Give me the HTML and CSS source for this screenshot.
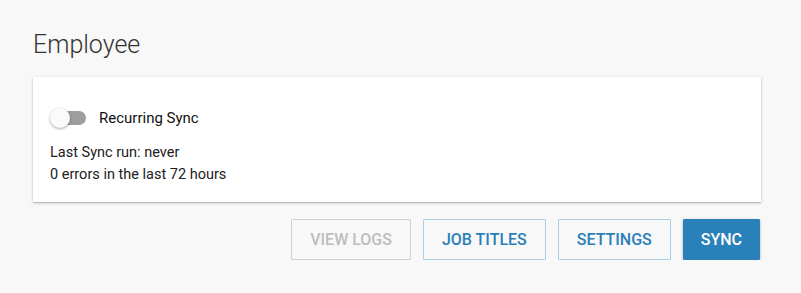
FILE: index.html
```html
<!DOCTYPE html>
<html>
<head>
<meta charset="utf-8">
<link rel="stylesheet" href="styles.css">
</head>
<body>
<div class="page">
  <h1 class="title">Employee</h1>
  <div class="card">
    <div class="toggle-row">
      <span class="switch"><span class="track"></span><span class="knob"></span></span>
      <span class="toggle-label">Recurring Sync</span>
    </div>
    <div class="info">
      <div>Last Sync run: never</div>
      <div>0 errors in the last 72 hours</div>
    </div>
  </div>
  <div class="actions">
    <button class="btn btn-disabled">VIEW LOGS</button>
    <button class="btn btn-outline">JOB TITLES</button>
    <button class="btn btn-outline">SETTINGS</button>
    <button class="btn btn-primary">SYNC</button>
  </div>
</div>
</body>
</html>
```
FILE: styles.css
```css
html, body {
  margin: 0;
  padding: 0;
  background: #f8f8f8;
  font-family: Roboto, "Liberation Sans", sans-serif;
  color: #212121;
}
.page {
  width: 728px;
  padding: 28px 0 0 33px;
}
.title {
  margin: 0;
  font-weight: 300;
  font-size: 25px;
  line-height: 34px;
  color: #333;
  height: 49px;
}
.card {
  background: #fff;
  box-shadow: 0 1px 3px rgba(0,0,0,0.2), 0 1px 1px rgba(0,0,0,0.12);
  padding: 30px 17px 17px 17px;
  height: 78px;
}
.toggle-row {
  display: flex;
  align-items: center;
  height: 22px;
}
.switch {
  position: relative;
  width: 36px;
  height: 22px;
  margin-right: 13px;
}
.track {
  position: absolute;
  left: 2px;
  top: 4px;
  width: 34px;
  height: 14px;
  border-radius: 7px;
  background: #9e9e9e;
}
.knob {
  position: absolute;
  left: 0;
  top: 1px;
  width: 20px;
  height: 20px;
  border-radius: 50%;
  background: #fafafa;
  box-shadow: 0 1px 3px rgba(0,0,0,0.35);
}
.toggle-label {
  font-size: 15px;
  font-weight: 400;
  color: #111;
}
.info {
  margin-top: 13px;
  font-size: 14.5px;
  line-height: 22px;
}
.actions {
  display: flex;
  justify-content: flex-end;
  gap: 12px;
  margin-top: 17px;
  margin-right: 1px;
}
.btn {
  font-family: Roboto, "Liberation Sans", sans-serif;
  font-size: 16px;
  font-weight: 500;
  height: 41px;
  padding: 0 18px;
  border-radius: 1px;
  background: transparent;
  cursor: pointer;
}
.btn-disabled {
  border: 1px solid #cfcfcf;
  color: #bdbdbd;
}
.btn-outline {
  border: 1px solid #a9cfe6;
  color: #2a7fb8;
}
.btn-primary {
  background: #2a80b9;
  border: 1px solid #2a80b9;
  color: #fff;
  padding: 0 17px;
  box-shadow: 0 1px 3px rgba(0,0,0,0.3);
}
```
